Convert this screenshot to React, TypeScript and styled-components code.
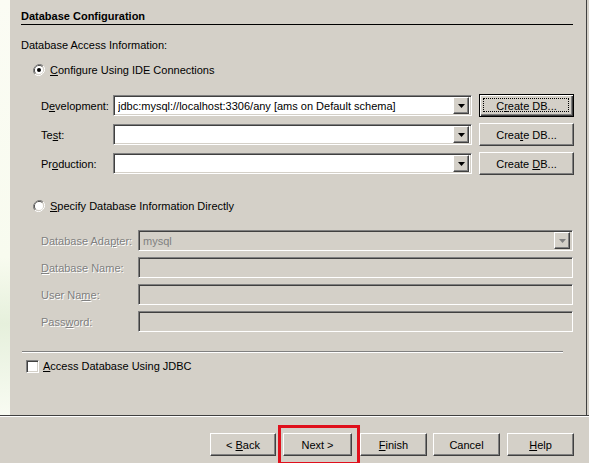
import React from "react";
import styled, { createGlobalStyle, css } from "styled-components";

const Global = createGlobalStyle`
  html, body { margin: 0; padding: 0; background: #d4d0c8; }
  body { font-family: Tahoma, "Liberation Sans", Arial, sans-serif; font-size: 11px; color: #000; }
`;

const Root = styled.div`
  width: 589px;
  height: 463px;
  display: flex;
  flex-direction: column;
  background: #d4d0c8;
  overflow: hidden;
`;

const Top = styled.div`
  height: 415px;
  display: flex;
`;

const LeftStrip = styled.div`
  width: 10px;
  background: linear-gradient(
    to bottom,
    #fbfcf4 0%,
    #f8fbef 62%,
    #e6f0dc 78%,
    #eef5e6 88%,
    #f8fbf2 100%
  );
`;

const Panel = styled.div`
  width: 577px;
  border-right: 1px solid #404040;
  padding: 9px 13px 0 11px;
  box-sizing: border-box;
  display: flex;
  flex-direction: column;
`;

const Title = styled.div`
  font-weight: bold;
  line-height: 14px;
  padding-bottom: 1px;
  border-bottom: 1px solid #000;
`;

const Text = styled.div<{ $mt?: number }>`
  margin-top: ${(p) => p.$mt ?? 0}px;
  line-height: 14px;
`;

const U = styled.span`
  text-decoration: underline;
`;

const RadioRow = styled.div<{ $mt: number }>`
  display: flex;
  align-items: center;
  gap: 5px;
  margin-top: ${(p) => p.$mt}px;
  margin-left: 12px;
  line-height: 14px;
`;

const Row = styled.div<{ $mt: number }>`
  display: flex;
  align-items: center;
  margin-top: ${(p) => p.$mt}px;
  padding-left: 20px;
`;

const Label = styled.div<{ $w: number; $disabled?: boolean }>`
  width: ${(p) => p.$w}px;
  flex: none;
  ${(p) =>
    p.$disabled &&
    css`
      color: #808080;
      text-shadow: 1px 1px 0 #fff;
    `}
`;

const sunken = css`
  box-sizing: border-box;
  border-style: solid;
  border-width: 1px;
  border-color: #808080 #fff #fff #808080;
  box-shadow: inset 1px 1px 0 #404040, inset -1px -1px 0 #d4d0c8;
`;

const raised = css`
  box-sizing: border-box;
  border-style: solid;
  border-width: 1px;
  border-color: #fff #404040 #404040 #fff;
  box-shadow: inset -1px -1px 0 #808080;
  background: #d4d0c8;
`;

const Combo = styled.div<{ $w: number; $disabled?: boolean }>`
  ${sunken};
  width: ${(p) => p.$w}px;
  height: 21px;
  background: ${(p) => (p.$disabled ? "#d4d0c8" : "#fff")};
  color: ${(p) => (p.$disabled ? "#808080" : "#000")};
  display: flex;
  align-items: center;
  padding: 2px 2px 2px 4px;
  flex: none;
`;

const ComboText = styled.div`
  flex: 1;
  white-space: nowrap;
  overflow: hidden;
`;

const Arrow = styled.div`
  ${raised};
  width: 16px;
  height: 17px;
  display: flex;
  align-items: center;
  justify-content: center;
  flex: none;
`;

const TextBox = styled.div<{ $w: number }>`
  ${sunken};
  width: ${(p) => p.$w}px;
  height: 21px;
  background: #d4d0c8;
  flex: none;
`;

const Button = styled.div<{ $w: number; $default?: boolean; $ml?: number }>`
  ${raised};
  width: ${(p) => p.$w}px;
  height: 23px;
  margin-left: ${(p) => p.$ml ?? 0}px;
  display: flex;
  align-items: center;
  justify-content: center;
  flex: none;
  position: relative;
  white-space: pre;
  ${(p) =>
    p.$default &&
    css`
      border: 1px solid #000;
      box-shadow: inset 1px 1px 0 #fff, inset -1px -1px 0 #404040,
        inset -2px -2px 0 #808080;
    `}
`;

const Focus = styled.span`
  position: absolute;
  inset: 3px 4px 4px 3px;
  border: 1px dotted #000;
`;

const Sep = styled.div<{ $mt: number }>`
  margin-top: ${(p) => p.$mt}px;
  margin-left: 1px;
  margin-right: 10px;
  border-top: 1px solid #808080;
  border-bottom: 1px solid #fff;
`;

const CheckRow = styled.div`
  display: flex;
  align-items: center;
  gap: 4px;
  margin-top: 6px;
  margin-left: 5px;
  line-height: 14px;
`;

const CheckBox = styled.div`
  ${sunken};
  width: 13px;
  height: 13px;
  background: #fff;
`;

const Footer = styled.div`
  flex: 1;
  border-top: 1px solid #404040;
  box-shadow: inset 0 1px 0 #fff;
  display: flex;
  justify-content: flex-end;
  padding: 17px 15px 0 0;
  box-sizing: border-box;
`;

const NextWrap = styled.div`
  position: relative;
  margin-left: 7px;
`;

const Highlight = styled.div`
  position: absolute;
  left: -5px;
  top: -8px;
  width: 82px;
  height: 40px;
  border: 3px solid #e0101c;
  box-sizing: border-box;
  pointer-events: none;
`;

const Radio = ({ checked }: { checked?: boolean }) => (
  <svg width="12" height="12" viewBox="0 0 12 12" style={{ flex: "none" }}>
    <path d="M10.2 1.8A6 6 0 0 0 1.8 10.2" stroke="#808080" fill="none" />
    <path d="M9.5 2.5A5 5 0 0 0 2.5 9.5" stroke="#404040" fill="none" />
    <path d="M1.8 10.2A6 6 0 0 0 10.2 1.8" stroke="#fff" fill="none" />
    <path d="M2.5 9.5A5 5 0 0 0 9.5 2.5" stroke="#d4d0c8" fill="none" />
    <circle cx="6" cy="6" r="4" fill="#fff" />
    {checked && <circle cx="6" cy="6" r="2" fill="#000" />}
  </svg>
);

const ArrowIcon = ({ color = "#000" }: { color?: string }) => (
  <svg width="7" height="4" viewBox="0 0 7 4">
    <path d="M0 0h7L3.5 4z" fill={color} />
  </svg>
);

const IdeCombo = ({ value }: { value?: string }) => (
  <Combo $w={359}>
    <ComboText>{value}</ComboText>
    <Arrow>
      <ArrowIcon />
    </Arrow>
  </Combo>
);

export default function App() {
  return (
    <Root>
      <Global />
      <Top>
        <LeftStrip />
        <Panel>
          <Title>Database Configuration</Title>
          <Text $mt={13}>Database Access Information:</Text>
          <RadioRow $mt={11}>
            <Radio checked />
            <span>
              <U>C</U>onfigure Using IDE Connections
            </span>
          </RadioRow>
          <Row $mt={17}>
            <Label $w={72}>
              D<U>e</U>velopment:
            </Label>
            <IdeCombo value="jdbc:mysql://localhost:3306/any [ams on Default schema]" />
            <Button $w={95} $ml={7} $default>
              <Focus />
              <span>
                C<U>r</U>eate DB...
              </span>
            </Button>
          </Row>
          <Row $mt={6}>
            <Label $w={72}>
              Te<U>s</U>t:
            </Label>
            <IdeCombo />
            <Button $w={95} $ml={7}>
              <span>
                Crea<U>t</U>e DB...
              </span>
            </Button>
          </Row>
          <Row $mt={6}>
            <Label $w={72}>
              Pr<U>o</U>duction:
            </Label>
            <IdeCombo />
            <Button $w={95} $ml={7}>
              <span>
                Create <U>D</U>B...
              </span>
            </Button>
          </Row>
          <RadioRow $mt={24}>
            <Radio />
            <span>
              <U>S</U>pecify Database Information Directly
            </span>
          </RadioRow>
          <Row $mt={17}>
            <Label $w={97} $disabled>
              Database Ada<U>p</U>ter:
            </Label>
            <Combo $w={435} $disabled>
              <ComboText>mysql</ComboText>
              <Arrow>
                <ArrowIcon color="#808080" />
              </Arrow>
            </Combo>
          </Row>
          <Row $mt={6}>
            <Label $w={97} $disabled>
              <U>D</U>atabase Name:
            </Label>
            <TextBox $w={435} />
          </Row>
          <Row $mt={6}>
            <Label $w={97} $disabled>
              User Na<U>m</U>e:
            </Label>
            <TextBox $w={435} />
          </Row>
          <Row $mt={6}>
            <Label $w={97} $disabled>
              Pass<U>w</U>ord:
            </Label>
            <TextBox $w={435} />
          </Row>
          <Sep $mt={19} />
          <CheckRow>
            <CheckBox />
            <span>
              <U>A</U>ccess Database Using JDBC
            </span>
          </CheckRow>
        </Panel>
      </Top>
      <Footer>
        <Button $w={66}>
          <span>
            &lt; <U>B</U>ack
          </span>
        </Button>
        <NextWrap>
          <Highlight />
          <Button $w={69}>
            <span>Next &gt;</span>
          </Button>
        </NextWrap>
        <Button $w={67} $ml={8}>
          <span>
            <U>F</U>inish
          </span>
        </Button>
        <Button $w={67} $ml={6}>
          <span>Cancel</span>
        </Button>
        <Button $w={67} $ml={7}>
          <span>
            <U>H</U>elp
          </span>
        </Button>
      </Footer>
    </Root>
  );
}
